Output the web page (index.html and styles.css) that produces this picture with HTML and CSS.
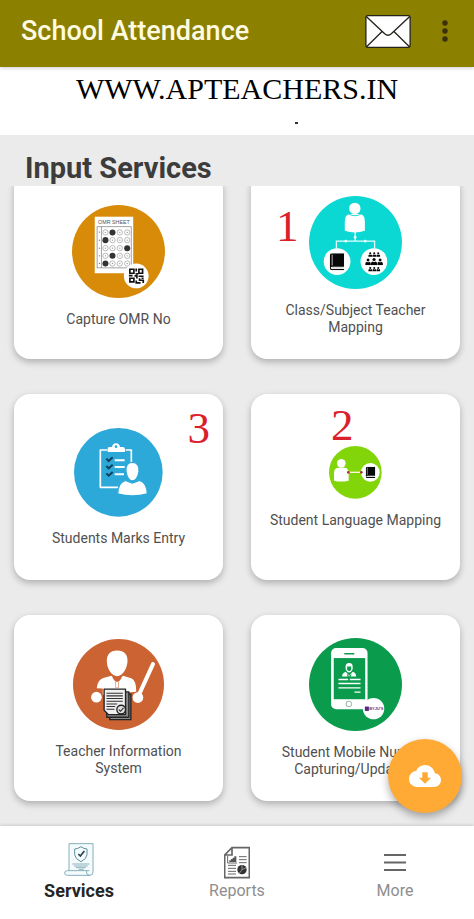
FILE: index.html
```html
<!DOCTYPE html>
<html lang="en">
<head>
<meta charset="utf-8">
<meta name="viewport" content="width=device-width, initial-scale=1">
<title>School Attendance</title>
<link rel="stylesheet" href="styles.css">
</head>
<body>
<svg class="defs" aria-hidden="true">
  <defs>
    <symbol id="book" viewBox="0 0 42 50">
      <path d="M7 0H42V40H7Q3 40 3 43T7 46H42V50H7Q0 50 0 43V7Q0 0 7 0Z" fill="#080808"/>
      <path d="M7 4V36" stroke="#fff" stroke-width="2"/>
      <path d="M6 43H40" stroke="#444" stroke-width="1"/>
    </symbol>
    <symbol id="person" viewBox="0 0 20 24">
      <circle cx="10" cy="6" r="5"/>
      <path d="M0 24V19Q0 13 6 12L10 15L14 12Q20 13 20 19V24Z"/>
    </symbol>
  </defs>
</svg>
<div class="app">
  <header class="topbar">
    <h1 class="topbar-title">School Attendance</h1>
    <button class="mail" type="button" aria-label="Messages">
      <svg viewBox="0 0 138 100" width="46" height="33" fill="#fff" stroke="#25231b" stroke-width="4" stroke-linejoin="round">
        <rect x="2" y="2" width="134" height="96" rx="6"/>
        <path d="M4 5L59 57Q69 66 79 57L134 5M4 96L51 50M134 96L87 50" fill="none"/>
      </svg>
    </button>
    <button class="menu" type="button" aria-label="More options">
      <svg viewBox="0 0 6 22" width="6" height="22" fill="#3b2f0c"><circle cx="3" cy="3" r="2.7"/><circle cx="3" cy="11" r="2.7"/><circle cx="3" cy="19" r="2.7"/></svg>
    </button>
  </header>
  <div class="banner">
    <p class="banner-text">WWW.APTEACHERS.IN</p>
    <span class="banner-mark"></span>
  </div>
  <h2 class="heading">Input Services</h2>
  <main class="services">
    <div class="grid">
      <button class="card" type="button">
        <svg class="icon" viewBox="37 27 278 278">
          <circle cx="176" cy="166" r="139" fill="#d78b08"/>
          <rect x="105" y="62" width="115" height="169" fill="#fff"/>
          <text class="omr" x="115" y="84">OMR SHEET</text>
          <rect x="112" y="92" width="102" height="123" fill="none" stroke="#777" stroke-width="2"/>
          <path d="M125 92V215" stroke="#777" stroke-width="2"/>
          <g fill="#777"><circle cx="119" cy="108" r="2"/><circle cx="119" cy="132" r="2"/><circle cx="119" cy="156" r="2"/><circle cx="119" cy="179" r="2"/><circle cx="119" cy="202" r="2"/></g>
          <g fill="#fff" stroke="#999" stroke-width="2">
            <circle cx="137" cy="109" r="8"/><circle cx="180" cy="109" r="8"/><circle cx="202" cy="109" r="8"/>
            <circle cx="158" cy="132" r="8"/><circle cx="180" cy="132" r="8"/><circle cx="202" cy="132" r="8"/>
            <circle cx="137" cy="156" r="8"/><circle cx="158" cy="156" r="8"/><circle cx="180" cy="156" r="8"/>
            <circle cx="137" cy="179" r="8"/><circle cx="180" cy="179" r="8"/><circle cx="202" cy="179" r="8"/>
            <circle cx="158" cy="202" r="8"/><circle cx="180" cy="202" r="8"/><circle cx="202" cy="202" r="8"/>
          </g>
          <g fill="#999"><circle cx="137" cy="109" r="2"/><circle cx="180" cy="109" r="2"/><circle cx="202" cy="109" r="2"/><circle cx="158" cy="132" r="2"/><circle cx="180" cy="132" r="2"/><circle cx="202" cy="132" r="2"/><circle cx="137" cy="156" r="2"/><circle cx="158" cy="156" r="2"/><circle cx="180" cy="156" r="2"/><circle cx="137" cy="179" r="2"/><circle cx="180" cy="179" r="2"/><circle cx="202" cy="179" r="2"/><circle cx="158" cy="202" r="2"/><circle cx="180" cy="202" r="2"/><circle cx="202" cy="202" r="2"/></g>
          <g fill="#333"><circle cx="158" cy="109" r="9"/><circle cx="137" cy="132" r="9"/><circle cx="202" cy="156" r="9"/><circle cx="158" cy="179" r="9"/><circle cx="137" cy="202" r="9"/></g>
          <circle cx="229" cy="239" r="37" fill="#fff"/>
          <g fill="none" stroke="#111" stroke-width="5"><path d="M210 219H222V231H210ZM237 219H248V231H237ZM210 246H222V257H210Z"/><path d="M229 217V226M227 233H235M207 238H218M224 239H231V247M236 240H251M239 246V252H250V260M229 253V260H242M245 246H251"/></g>
        </svg>
        <span class="label">Capture OMR No</span>
      </button>
      <button class="card" type="button">
        <span class="step step-1">1</span>
        <svg class="icon" viewBox="133 33 278 278">
          <circle cx="272" cy="172" r="139" fill="#0bd8d3"/>
          <g fill="#fff"><circle cx="270" cy="70" r="17"/><path d="M240 137V109Q240 87 258 87H282Q300 87 300 109V137Q270 147 240 137Z"/><circle cx="217" cy="229" r="40"/><circle cx="327" cy="229" r="40"/><circle cx="271" cy="156" r="4"/><circle cx="243" cy="168" r="4"/><circle cx="301" cy="168" r="4"/></g>
          <path d="M253 88Q270 96 287 88" fill="none" stroke="#0bd8d3" stroke-width="3"/>
          <path d="M271 140V168M215 190V168H329V190" fill="none" stroke="#e2ffff" stroke-width="4"/>
          <use href="#book" x="195" y="204" width="43" height="51"/>
          <g fill="#050505"><use href="#person" x="310" y="200" width="12" height="15"/><use href="#person" x="322" y="200" width="12" height="15"/><use href="#person" x="334" y="200" width="12" height="15"/><use href="#person" x="301" y="219" width="17" height="21"/><use href="#person" x="318" y="217" width="19" height="23"/><use href="#person" x="337" y="219" width="17" height="21"/><use href="#person" x="310" y="244" width="12" height="15"/><use href="#person" x="322" y="244" width="12" height="15"/><use href="#person" x="334" y="244" width="12" height="15"/></g>
        </svg>
        <span class="label">Class/Subject Teacher<br>Mapping</span>
      </button>
      <button class="card" type="button">
        <span class="step step-3">3</span>
        <svg class="icon icon-marks" viewBox="42 82 267 267">
          <circle cx="175" cy="215" r="133" fill="#2da9d9"/>
          <path d="M142 148H121V260H178M197 148H214V190" fill="none" stroke="#fff" stroke-width="5" stroke-linejoin="round"/>
          <path d="M143 154V143Q143 139 151 139H156Q158 128 168 128T180 139H187Q195 139 195 145V154Z" fill="#fff"/><circle cx="168" cy="138" r="4" fill="#2da9d9"/>
          <path d="M164 179H194M164 199H194M164 221H192" stroke="#fff" stroke-width="6"/>
          <path d="M139 174L146 181L158 170M139 196L146 203L158 192M139 218L146 225L158 214" fill="none" stroke="#133f5b" stroke-width="6"/>
          <g fill="#fff" stroke="#2da9d9" stroke-width="4"><path d="M173 280Q173 246 196 239L217 247L239 239Q262 246 262 280Q217 292 173 280Z"/><path d="M217 185C201 185 196 198 198 213C200 229 208 241 217 241C227 241 235 229 237 213C239 198 233 185 217 185Z"/></g>
        </svg>
        <span class="label">Students Marks Entry</span>
      </button>
      <button class="card" type="button">
        <span class="step step-2">2</span>
        <svg class="icon icon-language" viewBox="87 135 159 159">
          <circle cx="166" cy="214" r="79" fill="#82d508"/>
          <g fill="#fff"><circle cx="124" cy="187" r="13"/><path d="M102 239V216Q102 200 117 200H132Q146 200 146 216V239Q124 244 102 239Z"/><circle cx="211" cy="214" r="28"/></g>
          <path d="M146 214H183" stroke="#fff7dc" stroke-width="4"/><g fill="#b52632"><circle cx="145" cy="214" r="4"/><circle cx="184" cy="214" r="4"/></g>
          <use href="#book" x="197" y="197" width="29" height="34"/>
        </svg>
        <span class="label">Student Language Mapping</span>
      </button>
      <button class="card" type="button">
        <svg class="icon icon-teacher" viewBox="39 26 272 272">
          <circle cx="175" cy="162" r="136" fill="#cb6333"/>
          <g fill="#fff"><path d="M171 60C149 60 140 73 140 92C140 114 154 137 171 137S201 114 202 92C203 73 193 60 171 60Z"/><path d="M110 173Q112 147 132 142L154 136L171 158L188 136L213 143Q228 148 228 184L128 193V174Z"/><circle cx="109" cy="200" r="16"/><circle cx="233" cy="201" r="16"/></g>
          <path d="M278 101L235 195" stroke="#fff" stroke-width="12" stroke-linecap="round"/>
          <path d="M157 142L171 160L185 142M166 151H176V172H166Z" fill="#cb6333"/><path d="M168 154H174L175 171H167Z" fill="#fff"/>
          <g stroke="#222" stroke-width="4" fill="#8c8c8c" stroke-linejoin="round"><path d="M149 191H212V267H149Z"/><path d="M140 184H206V260H140Z"/><path d="M132 176H196V252H145L132 239Z" fill="#efefef"/></g>
          <path d="M139 188H188M139 196H188M139 204H188M139 212H188M139 220H171M139 228H165M139 236H163" stroke="#333" stroke-width="3"/>
          <circle cx="183" cy="237" r="13" fill="#ddd" stroke="#222" stroke-width="4"/><path d="M176 237L181 242L190 232" fill="none" stroke="#222" stroke-width="3"/>
        </svg>
        <span class="label">Teacher Information<br>System</span>
      </button>
      <button class="card" type="button">
        <svg class="icon" viewBox="148 24 278 278">
          <circle cx="287" cy="163" r="139" fill="#0b9b4d"/>
          <rect x="214" y="54" width="109" height="183" rx="15" fill="#fff"/><rect x="222" y="84" width="94" height="123" fill="#0b9b4d"/>
          <path d="M255 71H282" stroke="#0b9b4d" stroke-width="4" stroke-linecap="round"/><circle cx="267" cy="221" r="8" fill="#fff" stroke="#a6bbae" stroke-width="3"/>
          <g fill="#fff"><path d="M268 99C258 99 256 107 258 118Q262 127 268 127T278 118C280 107 278 99 268 99Z"/><path d="M247 139Q247 128 258 125L268 136L279 125Q289 128 289 139Z"/></g>
          <path d="M262 109H274V119Q268 127 262 119ZM261 130L268 138L275 130L273 140H263Z" fill="#0b9b4d"/>
          <path d="M236 148H265M270 148H302M236 160H302M236 173H302M284 186H302" stroke="#fff" stroke-width="4"/>
          <circle cx="341" cy="235" r="32" fill="#fff"/><rect x="315" y="229" width="12" height="13" fill="#5c277c"/><text class="byju" x="328" y="240">BYJU'S</text>
        </svg>
        <span class="label">Student Mobile Number<br>Capturing/Updation</span>
      </button>
    </div>
    <button class="fab" type="button" aria-label="Download">
      <svg viewBox="0 0 94 64" width="32" height="22"><path d="M76 24C72 9 61 0 47 0C36 0 26 6 21 17C9 18 0 28 0 40C0 54 10 64 24 64H74C86 64 94 55 94 44C94 33 86 25 76 24Z" fill="#fff"/><path d="M39 21H55V37H65L47 55L29 37H39Z" fill="#ffaa35"/></svg>
    </button>
  </main>
  <nav class="tabs">
    <a class="tab tab-active" href="#services">
      <svg viewBox="0 0 90 108" width="30" height="36" fill="none" stroke="#86afbb" stroke-width="3">
        <path d="M15 83V2H87V87Q87 97 78 97H10Q2 97 2 90T10 83H68V90Q68 97 78 97M68 83H76" fill="#f5fbfc"/>
        <path d="M51 11Q41 18 32 18V35Q33 48 51 56Q68 48 69 35V18Q60 18 51 11Z" stroke="#5d909e"/><path d="M43 33L49 39L61 24" stroke="#29434c" stroke-width="5"/><path d="M25 63H76M30 69H71M36 74H65M44 79H59"/>
      </svg>
      <span>Services</span>
    </a>
    <a class="tab" href="#reports">
      <svg viewBox="0 -12 78 108" width="26" height="36" fill="none" stroke="#666" stroke-width="5">
        <path d="M24 2H76V92H2V24ZM24 2V24H2"/><path d="M11 27V48H39" stroke-width="3"/><path d="M16 45V40H21V36H26V32H31V28H37V45Z" fill="#555" stroke="none"/><path d="M45 29H68M45 38H68M45 47H68M12 55H36M12 64H36M12 73H36M12 81H36" stroke-width="3"/><circle cx="54" cy="68" r="14" fill="#333" stroke="none"/><path d="M54 54V68L45 80M54 68L66 62" stroke="#bbb" stroke-width="2"/>
      </svg>
      <span>Reports</span>
    </a>
    <a class="tab" href="#more">
      <svg viewBox="0 0 22 36" width="22" height="36" stroke="#666" stroke-width="2"><path d="M0 12H22M0 19.5H22M0 27H22"/></svg>
      <span>More</span>
    </a>
  </nav>
</div>
</body>
</html>
```
FILE: styles.css
```css
* { box-sizing: border-box; }
body { margin: 0; font-family: Roboto, "Liberation Sans", sans-serif; background: #ebebeb; }
button { border: 0; padding: 0; font: inherit; color: inherit; background: none; cursor: pointer; }
.defs { position: absolute; width: 0; height: 0; }
.app { display: flex; flex-direction: column; height: 100vh; }
.topbar { display: flex; align-items: center; flex: none; height: 67px; padding: 0 26px 5px 21px; background: #8b8000; box-shadow: 0 1px 4px rgba(0, 0, 0, .2); z-index: 1; }
.topbar-title { flex: 1; margin: 0; font-size: 27px; line-height: 32px; font-weight: 500; color: #fffbe0; }
.mail, .menu { display: flex; }
.menu { margin-left: 31px; }
.banner { display: flex; flex-direction: column; align-items: center; flex: none; height: 68px; padding-top: 4px; background: #fff; }
.banner-text { margin: 0; font-family: "Liberation Serif", serif; font-size: 30px; line-height: 36px; color: #000; }
.banner-mark { width: 3px; height: 2px; margin: 15px 0 0 118px; background: #333; }
.heading { flex: none; margin: 0; padding: 16px 25px 0; height: 51px; font-size: 29px; line-height: 34px; font-weight: 700; color: #3c3c3c; }
.services { position: relative; display: flex; flex-direction: column; justify-content: flex-end; flex: 1; min-height: 0; overflow: hidden; }
.grid { display: grid; grid-template-columns: 1fr 1fr; grid-auto-rows: 186px; gap: 35px 28px; padding: 0 14px 25px; }
.card { position: relative; display: flex; flex-direction: column; align-items: center; justify-content: center; gap: 13px; border-radius: 16px; background: #fff; box-shadow: 0 3px 7px rgba(0, 0, 0, .26); }
.icon { display: block; width: 93px; height: 93px; }
.icon-marks { width: 89px; height: 89px; }
.icon-language { width: 53px; height: 53px; }
.icon-teacher { width: 91px; height: 91px; }
.label { font-size: 14px; line-height: 17px; color: #505050; white-space: nowrap; }
.omr { font-family: "Liberation Sans", sans-serif; font-size: 16px; fill: #555; }
.byju { font-family: "Liberation Sans", sans-serif; font-size: 12px; font-weight: 700; fill: #803080; }
.step { position: absolute; font-family: "Liberation Serif", serif; font-size: 45px; line-height: 46px; color: #da202b; }
.step-1 { top: 30px; left: 25px; }
.step-2 { top: 8px; left: 80px; }
.step-3 { top: 11px; right: 13px; }
.fab { position: absolute; right: 12px; bottom: 13px; display: flex; align-items: center; justify-content: center; width: 74px; height: 74px; border-radius: 50%; background: #ffaa35; box-shadow: 0 4px 8px rgba(0, 0, 0, .32); }
.tabs { display: grid; grid-template-columns: repeat(3, 1fr); flex: none; padding: 17px 0; background: #fff; box-shadow: 0 -1px 3px rgba(0, 0, 0, .14); z-index: 1; }
.tab { display: flex; flex-direction: column; align-items: center; gap: 1px; font-size: 16px; line-height: 22px; color: #8e8e8e; text-decoration: none; }
.tab-active { font-size: 18px; font-weight: 700; color: #252525; }
```
